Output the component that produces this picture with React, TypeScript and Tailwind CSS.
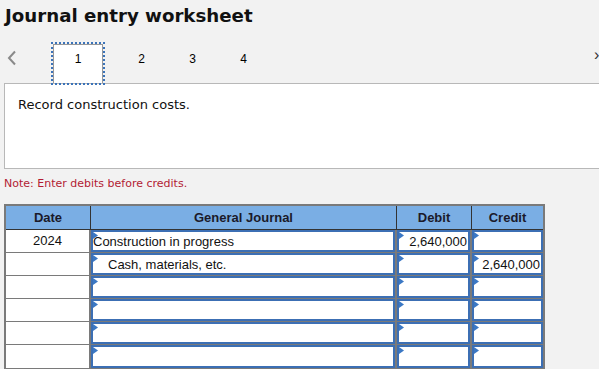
import React from "react";

const Tri = () => (
  <svg className="absolute left-0 top-0" width="5" height="7" viewBox="0 0 5 7">
    <polygon points="0,0 5,3.5 0,7" fill="#3b78c4" />
  </svg>
);

function InputCell({ w, text, align = "left", indent = 0, last = false }: { w: number; text?: string; align?: "left" | "right"; indent?: number; last?: boolean }) {
  return (
    <div
      className={`relative h-full border-2 border-[#3c6fb4] bg-white flex items-center ${last ? "" : "mr-[2px]"}`}
      style={{ width: w }}
    >
      <Tri />
      <span
        className={`w-full whitespace-nowrap text-[13px] leading-[15px] text-[#111] ${align === "right" ? "text-right pr-[1px]" : ""}`}
        style={{ paddingLeft: indent }}
      >
        {text}
      </span>
    </div>
  );
}

const rows: { date: string; acct: string; indent: number; debit: string; credit: string }[] = [
  { date: "2024", acct: "Construction in progress", indent: 0, debit: "2,640,000", credit: "" },
  { date: "", acct: "Cash, materials, etc.", indent: 15, debit: "", credit: "2,640,000" },
  { date: "", acct: "", indent: 0, debit: "", credit: "" },
  { date: "", acct: "", indent: 0, debit: "", credit: "" },
  { date: "", acct: "", indent: 0, debit: "", credit: "" },
  { date: "", acct: "", indent: 0, debit: "", credit: "" },
];

export default function App() {
  return (
    <div className="relative w-[599px] h-[369px] overflow-hidden bg-[#f2f2f2] font-['DejaVu_Sans',sans-serif]">
      <div className="pt-[5px] pl-[5px] text-[18.2px] font-bold leading-[22px] text-[#111]">
        Journal entry worksheet
      </div>

      {/* tabs */}
      <div className="relative z-10 mt-[15px] flex h-[41px] items-start font-['Liberation_Sans',sans-serif] text-[12px] leading-[14px] text-black">
        <div className="ml-[7px] mt-[8px] w-[44px]">
          <svg width="10" height="16" viewBox="0 0 10 16">
            <polyline points="8,1.5 2,8 8,14.5" fill="none" stroke="#8a8a8a" strokeWidth="2" />
          </svg>
        </div>
        <div className="h-[43px] w-[54px] outline-2 outline-dotted outline-[#3b73b9] -outline-offset-2 p-[2px]">
          <div className="flex h-full w-full justify-center border border-[#999] border-b-0 bg-white pt-[7px]">
            1
          </div>
        </div>
        <div className="ml-[11px] flex w-[51px] justify-center pt-[10px]">2</div>
        <div className="flex w-[51px] justify-center pt-[10px]">3</div>
        <div className="flex w-[51px] justify-center pt-[10px]">4</div>
        <div className="absolute left-[594px] top-[6px] text-[16px] text-[#333]">›</div>
      </div>

      {/* content box */}
      <div className="ml-[4px] h-[86px] w-[640px] border border-[#b8b8b8] bg-white pl-[13px] pt-[13px] text-[13px] leading-[16px] text-[#111]">
        Record construction costs.
      </div>

      <div className="ml-[4px] mt-[8px] text-[11px] leading-[14px] text-[#b31b34]">
        Note: Enter debits before credits.
      </div>

      {/* table */}
      <div className="ml-[4px] mt-[13px] w-[541px] border-2 border-[#7a7a7a] font-['Liberation_Sans',sans-serif]">
        <div className="flex h-[24px] border-b border-[#333] bg-[#7aaee4] text-[13px] font-bold text-[#1a1a2a]">
          <div className="flex w-[85px] items-center justify-center border-r border-[#333]">Date</div>
          <div className="flex w-[306px] items-center justify-center border-r border-[#333]">General Journal</div>
          <div className="flex w-[75px] items-center justify-center border-r border-[#333]">Debit</div>
          <div className="flex w-[71px] items-center justify-center">Credit</div>
        </div>
        {rows.map((r, i) => (
          <div key={i} className={`flex h-[23px] ${i < rows.length - 1 ? "border-b border-[#7a7a7a]" : ""} bg-[#7a7a7a]`}>
            <div className="flex h-full w-[83px] items-center justify-center bg-white text-[13px] text-[#111] mr-[2px]">
              {r.date}
            </div>
            <InputCell w={304} text={r.acct} indent={r.indent} />
            <InputCell w={73} text={r.debit} align="right" />
            <InputCell w={71} text={r.credit} align="right" last />
          </div>
        ))}
      </div>
    </div>
  );
}
